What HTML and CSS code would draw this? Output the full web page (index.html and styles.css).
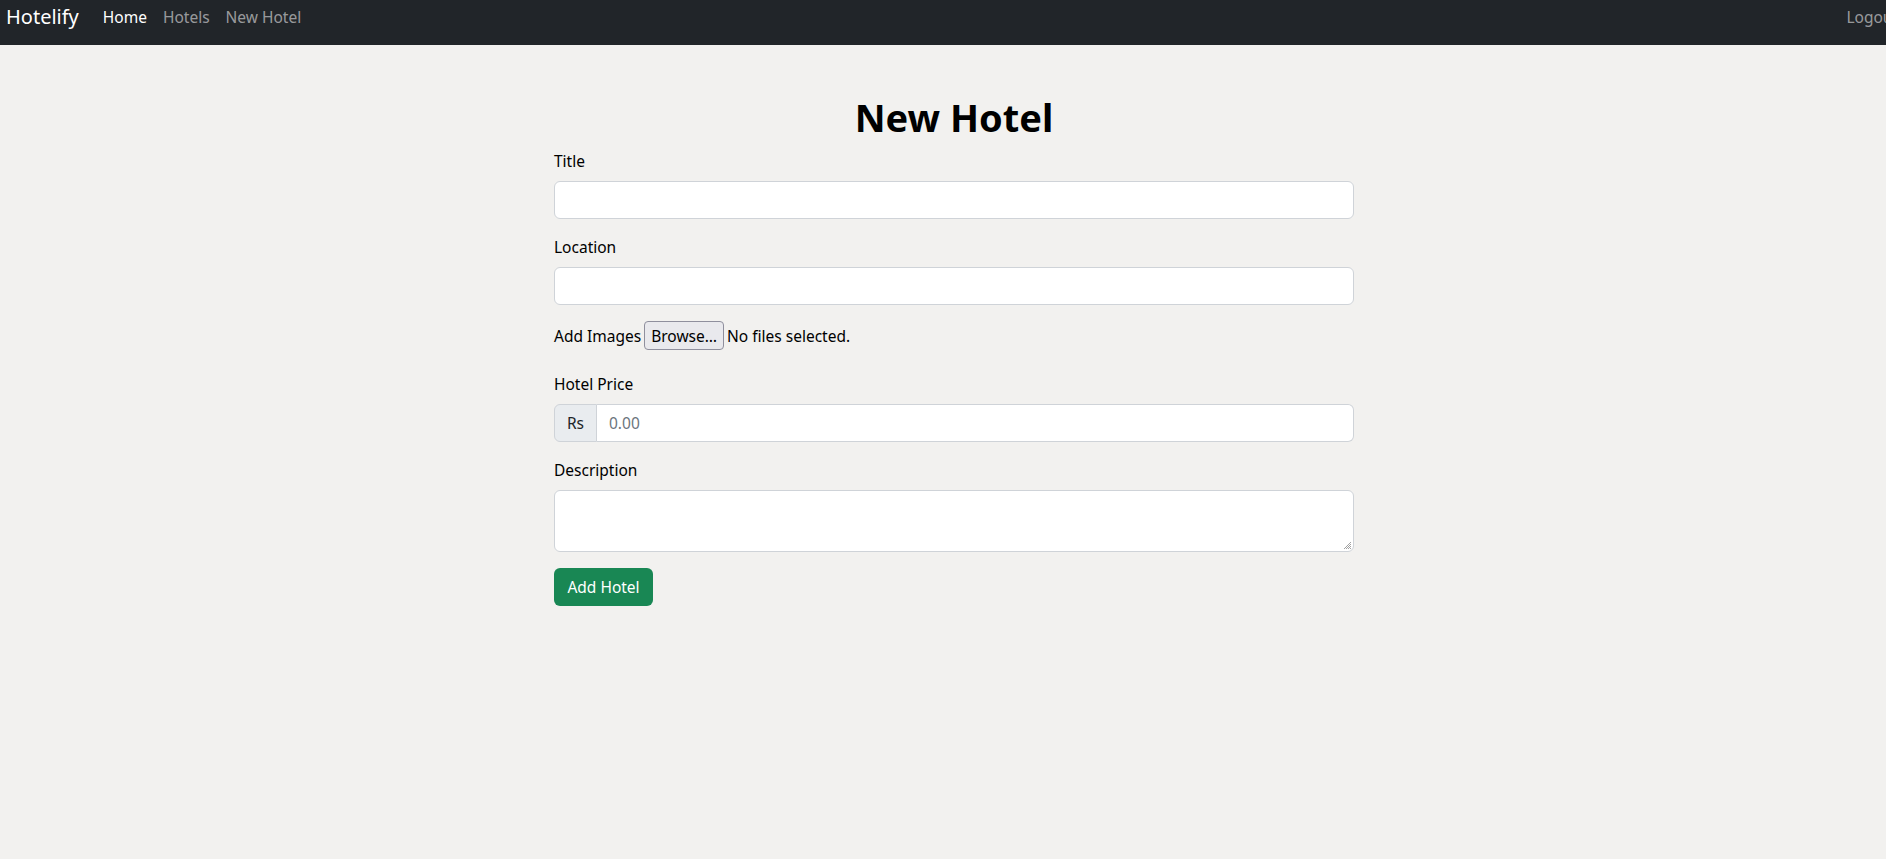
FILE: index.html
```html
<!DOCTYPE html>
<html lang="en">
<head>
<meta charset="utf-8">
<title>New Hotel</title>
<link rel="stylesheet" href="styles.css">
</head>
<body>
<nav class="navbar">
  <div class="nav-left">
    <a class="brand" href="#">Hotelify</a>
    <a class="nav-link active" href="#">Home</a>
    <a class="nav-link" href="#">Hotels</a>
    <a class="nav-link" href="#">New Hotel</a>
  </div>
  <a class="nav-link logout" href="#">Logout</a>
</nav>
<main class="page">
  <form class="hotel-form">
    <h1 class="heading">New Hotel</h1>
    <div class="field">
      <label class="form-label">Title</label>
      <div class="form-control"></div>
    </div>
    <div class="field">
      <label class="form-label">Location</label>
      <div class="form-control"></div>
    </div>
    <div class="file-row">
      <span class="file-label">Add Images</span>
      <span class="browse">Browse…</span>
      <span class="file-status">No files selected.</span>
    </div>
    <div class="field">
      <label class="form-label">Hotel Price</label>
      <div class="input-group">
        <span class="group-text">Rs</span>
        <div class="group-input"><span class="placeholder">0.00</span></div>
      </div>
    </div>
    <div class="field">
      <label class="form-label">Description</label>
      <div class="form-control textarea">
        <svg class="grip" width="9" height="9" viewBox="0 0 9 9"><path d="M8 1L1 8M8 3L3 8M8 5L5 8M8 7L7 8" stroke="#8a8a8a" stroke-width="0.8"/></svg>
      </div>
    </div>
    <button type="button" class="btn-success">Add Hotel</button>
  </form>
</main>
</body>
</html>
```

FILE: styles.css
```css
* { box-sizing: border-box; }
html, body { margin: 0; padding: 0; }
body {
  background: #f2f1ef;
  font-family: "Noto Sans", "Open Sans", sans-serif;
  font-size: 16px;
  line-height: 24px;
  color: #212529;
  overflow-x: hidden;
  height: 859px;
}
.navbar {
  height: 45px;
  background: #212529;
  display: flex;
  justify-content: space-between;
  align-items: flex-start;
  padding: 2px 0 0 6px;
  overflow: hidden;
}
.nav-left { display: flex; align-items: center; }
.brand {
  color: #fff;
  font-size: 20px;
  line-height: 30px;
  text-decoration: none;
  margin-right: 16px;
}
.nav-link {
  color: rgba(255,255,255,0.55);
  text-decoration: none;
  padding: 0 8px;
  font-size: 15.5px;
  line-height: 30px;
}
.nav-link.active { color: #fff; }
.logout { margin-right: -20px; }
.page { display: flex; justify-content: flex-start; padding-left: 554px; }
.hotel-form { width: 800px; display: flex; flex-direction: column; }
.heading {
  margin: 48px 0 8px;
  text-align: center;
  font-size: 38px;
  line-height: 48px;
  font-weight: 700;
  color: #000;
}
.field { display: flex; flex-direction: column; margin-bottom: 16px; }
.form-label { margin-bottom: 8px; color: #000; font-size: 15.5px; }
.form-control {
  height: 38px;
  background: #fff;
  border: 1px solid #cfd3d8;
  border-radius: 6px;
  position: relative;
}
.textarea { height: 62px; }
.grip { position: absolute; right: 1px; bottom: 1px; }
.file-row {
  display: flex;
  align-items: center;
  gap: 3px;
  height: 29px;
  margin-bottom: 22px;
  color: #000;
  font-size: 15.5px;
}
.browse {
  height: 29px;
  padding: 0 6px;
  display: flex;
  align-items: center;
  background: #e9e9ed;
  border: 1px solid #8f8f9d;
  border-radius: 4px;
}
.input-group { display: flex; height: 38px; }
.group-text {
  width: 43px;
  display: flex;
  align-items: center;
  justify-content: center;
  background: #e9ecef;
  border: 1px solid #cfd3d8;
  border-radius: 6px 0 0 6px;
  color: #212529;
  font-size: 15.5px;
}
.group-input {
  flex: 1;
  background: #fff;
  border: 1px solid #cfd3d8;
  border-left: none;
  border-radius: 0 6px 6px 0;
  display: flex;
  align-items: center;
  padding-left: 12px;
}
.placeholder { color: #6c757d; font-size: 15.5px; }
.btn-success {
  align-self: flex-start;
  width: 99px;
  height: 38px;
  background: #198754;
  color: #fff;
  border: none;
  border-radius: 6px;
  font-family: inherit;
  font-size: 15.5px;
  padding: 0;
}
```
